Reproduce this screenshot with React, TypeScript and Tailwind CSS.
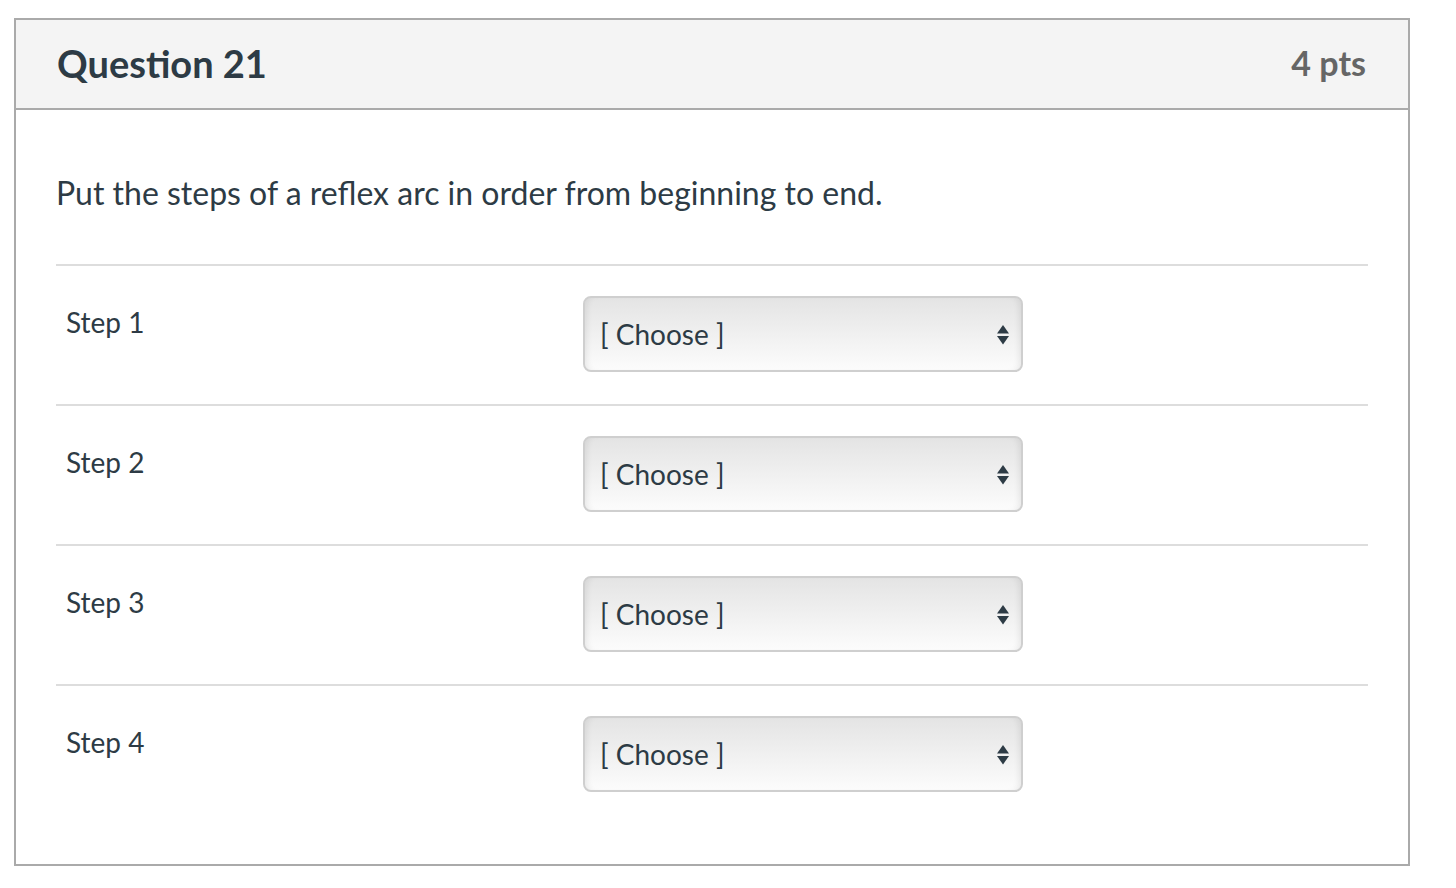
import React from 'react';

const steps = ['Step 1', 'Step 2', 'Step 3', 'Step 4'];

const SelectBox: React.FC = () => (
    <div className="relative flex h-[76px] w-[440px] items-center rounded-[8px] border-2 border-[#cfcfcf] bg-linear-to-b from-[#e4e4e4] to-[#fcfcfc] pl-[15px] shadow-[inset_6px_0_6px_-4px_rgba(0,0,0,0.08),inset_-6px_0_6px_-4px_rgba(0,0,0,0.08)]">
        <span className="text-[28px] leading-none text-[#2d3b45]">[ Choose ]</span>
        <svg className="absolute right-[12px] top-[27px]" width="12" height="20" viewBox="0 0 12 20">
            <polygon points="6,0 12,8.5 0,8.5" fill="#2d3b45" />
            <polygon points="0,11 12,11 6,19.5" fill="#2d3b45" />
        </svg>
    </div>
);

export default function App() {
    return (
        <div className="min-h-screen bg-white pl-[14px] pt-[18px] font-['Lato',sans-serif]">
            <div className="w-[1396px] border-2 border-[#aaaaaa]">
                <div className="flex h-[90px] items-center justify-between border-b-2 border-[#aaaaaa] bg-[#f4f4f4] pb-[3px] pl-[41px] pr-[42px]">
                    <h2 className="text-[38px] font-bold leading-none text-[#2d3b45]">Question 21</h2>
                    <span className="text-[34px] font-bold leading-none text-[#666666]">4 pts</span>
                </div>

                <div className="px-[40px] pb-[40px] pt-[62px]">
                    <p className="mb-[50px] text-[32px] leading-[42px] text-[#2d3b45]">
                        Put the steps of a reflex arc in order from beginning to end.
                    </p>

                    {steps.map((step) => (
                        <div key={step} className="flex border-t-2 border-[#dddddd] pb-[32px] pt-[30px]">
                            <div className="w-[527px] pl-[10px] pt-[8px] text-[28px] leading-[36px] text-[#2d3b45]">
                                {step}
                            </div>
                            <SelectBox />
                        </div>
                    ))}
                </div>
            </div>
        </div>
    );
}
